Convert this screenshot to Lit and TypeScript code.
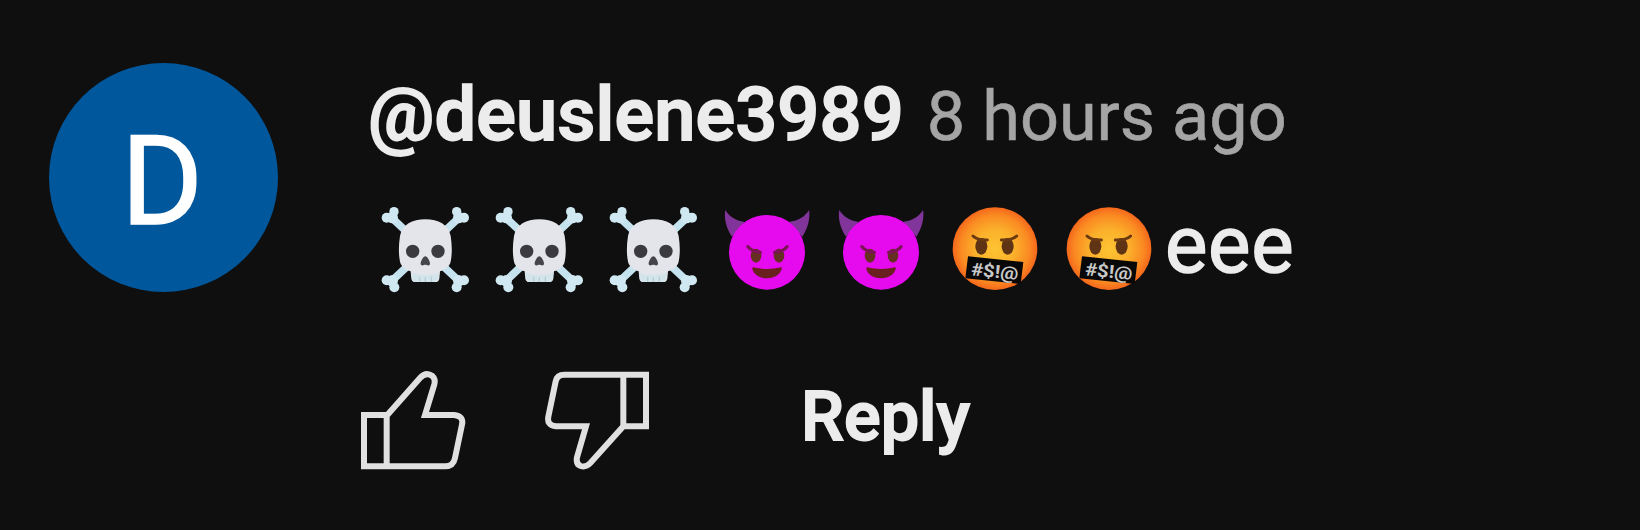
import { LitElement, html, svg, css } from "lit";
import { customElement } from "lit/decorators.js";

type EmojiKind = "skull" | "devil" | "cursing";

@customElement("comment-emoji")
class CommentEmoji extends LitElement {
  static properties = { kind: { type: String } };
  declare kind: EmojiKind;

  static styles = css`
    :host { display: block; width: 114px; height: 120px; flex: none; }
    .art { display: block; width: 114px; height: 120px; }
    .swear { font: 700 54px "Roboto", sans-serif; }
  `;

  private skull() {
    return svg`
      <g stroke="#c4e3ee" stroke-width="23" stroke-linecap="round">
        <path d="M62 80L270 276M270 80L62 276"/>
      </g>
      <g fill="#cfe8f1">
        <circle cx="50" cy="83" r="15"/><circle cx="72" cy="65" r="14"/><circle cx="67" cy="83" r="17"/>
        <circle cx="260" cy="65" r="14"/><circle cx="282" cy="83" r="15"/><circle cx="266" cy="83" r="17"/>
        <circle cx="50" cy="271" r="15"/><circle cx="73" cy="292" r="15"/><circle cx="67" cy="272" r="17"/>
        <circle cx="282" cy="271" r="15"/><circle cx="260" cy="292" r="15"/><circle cx="266" cy="272" r="17"/>
      </g>
      <path d="M166 88C205 88 236 104 242 138C246 165 247 190 242 215C238 231 224 239 210 244L208 266Q206 276 196 276H136Q126 276 124 266L122 244C108 239 94 231 90 215C85 190 86 165 90 138C96 104 127 88 166 88Z" fill="#e3e5ea"/>
      <path d="M124 248L126 266Q128 276 138 276H194Q204 276 206 266L208 248Q166 262 124 248Z" fill="#d3e5eb"/>
      <path d="M149 260V275M166 262V276M184 260V275" stroke="#b5ced6" stroke-width="4"/>
      <circle cx="128" cy="184" r="20" fill="#3b3b3f"/><circle cx="204" cy="184" r="20" fill="#3b3b3f"/>
      <path d="M166 199C172 199 181 215 180 222C178 230 169 224 166 224C163 224 154 230 152 222C151 215 160 199 166 199Z" fill="#45454a"/>`;
  }

  private devil() {
    return svg`
      <path d="M46 60C57 79 76 92 104 96L66 140C50 117 41 86 46 60Z" fill="#81349a"/>
      <path d="M297 60C286 79 267 92 236 96L277 140C292 117 302 86 297 60Z" fill="#81349a"/>
      <ellipse cx="171" cy="187" rx="114" ry="112" fill="#e60bef"/>
      <ellipse cx="138" cy="197" rx="16" ry="21" fill="#653022"/>
      <ellipse cx="207" cy="197" rx="16" ry="21" fill="#653022"/>
      <path d="M114 170Q126 185 151 187M231 170Q219 185 194 187" fill="none" stroke="#7b1455" stroke-width="10" stroke-linecap="round"/>
      <path d="M130 232Q171 242 213 232Q217 232 215 238C204 274 138 274 127 238Q126 232 130 232Z" fill="#69201f"/>`;
  }

  private cursing() {
    return svg`
      <defs>
        <radialGradient id="face" cx="0.5" cy="0.5" r="0.52">
          <stop offset="0" stop-color="#fdc432"/><stop offset="0.45" stop-color="#fbb02b"/>
          <stop offset="0.78" stop-color="#fa8a22"/><stop offset="1" stop-color="#f4601a"/>
        </radialGradient>
      </defs>
      <ellipse cx="165" cy="176" rx="127" ry="124" fill="url(#face)"/>
      <ellipse cx="124" cy="169" rx="18" ry="25" fill="#5f3414"/>
      <ellipse cx="203" cy="169" rx="18" ry="25" fill="#5f3414"/>
      <path d="M99 138Q112 151 142 150M230 138Q217 151 184 150" fill="none" stroke="#6b3a12" stroke-width="9" stroke-linecap="round"/>
      <path d="M84 199L250 216L242 282L76 265Z" fill="#080808"/>
      <text class="swear" x="92" y="256" textLength="142" lengthAdjust="spacingAndGlyphs" fill="#c9c9c9" transform="rotate(5.5 92 256)">#$!@</text>`;
  }

  render() {
    const box = this.kind === "devil" ? "0 0 342 360" : "-6 0 342 360";
    const art = this.kind === "skull" ? this.skull() : this.kind === "devil" ? this.devil() : this.cursing();
    return html`<svg class="art" viewBox=${box} aria-hidden="true">${art}</svg>`;
  }
}

@customElement("app-root")
class AppRoot extends LitElement {
  static styles = css`
    :host {
      display: block; box-sizing: border-box; width: 1640px; height: 530px;
      background: #0f0f0f; color: #ececec; overflow: hidden;
      font-family: "Roboto", sans-serif;
    }
    .comment { display: flex; align-items: flex-start; padding-left: 49px; }
    .avatar {
      flex: none; box-sizing: border-box; width: 229px; height: 229px; margin-top: 63px; border-radius: 50%;
      background: #00579c; color: #fff; display: flex; justify-content: center;
      font-size: 125px; line-height: 237px; padding-right: 3px; -webkit-text-stroke: 1.5px #fff;
    }
    .main { padding: 71px 0 0 90px; }
    .header { display: flex; align-items: baseline; height: 88px; line-height: 88px; white-space: nowrap; }
    .handle { font-size: 74px; font-weight: 500; letter-spacing: 0.1px; -webkit-text-stroke: 1.8px #ececec; }
    .time { font-size: 68.4px; color: #a5a5a5; margin-left: 23px; -webkit-text-stroke: 0.6px #a5a5a5; }
    .body { display: flex; align-items: flex-start; height: 120px; margin-top: 31px; }
    .text { font-size: 80px; line-height: 110px; letter-spacing: 0.7px; margin-left: -1px; -webkit-text-stroke: 1.4px #ececec; }
    .actions { display: flex; align-items: flex-start; margin-top: 40px; margin-left: -9px; }
    .thumb { display: block; width: 110px; height: 140px; fill: none; stroke: #e0e0e0; stroke-width: 18; }
    .thumb + .thumb { margin-left: 76px; }
    .reply { font-size: 68.4px; font-weight: 500; line-height: 134px; margin-left: 146px; -webkit-text-stroke: 1.8px #ececec; }
  `;

  render() {
    const emojis: EmojiKind[] = ["skull", "skull", "skull", "devil", "devil", "cursing", "cursing"];
    return html`
      <article class="comment">
        <div class="avatar">D</div>
        <div class="main">
          <div class="header">
            <span class="handle">@deuslene3989</span>
            <span class="time">8 hours ago</span>
          </div>
          <div class="body">
            ${emojis.map((kind) => html`<comment-emoji .kind=${kind}></comment-emoji>`)}
            <span class="text">eee</span>
          </div>
          <div class="actions">
            <svg class="thumb" viewBox="60 -2 330 420">
              <path d="M75 193H145L243 82Q261 62 280 76Q290 85 286 101L258 193H345Q375 196 369 222L348 322Q343 347 319 347H75ZM143 193V347"/>
            </svg>
            <svg class="thumb" viewBox="612 -2 330 420">
              <path d="M915 72H670Q648 72 644 92L622 198Q617 224 645 227H735L708 320Q704 340 719 346Q734 351 748 337L847 227H915ZM847 72V227"/>
            </svg>
            <span class="reply">Reply</span>
          </div>
        </div>
      </article>
    `;
  }
}
